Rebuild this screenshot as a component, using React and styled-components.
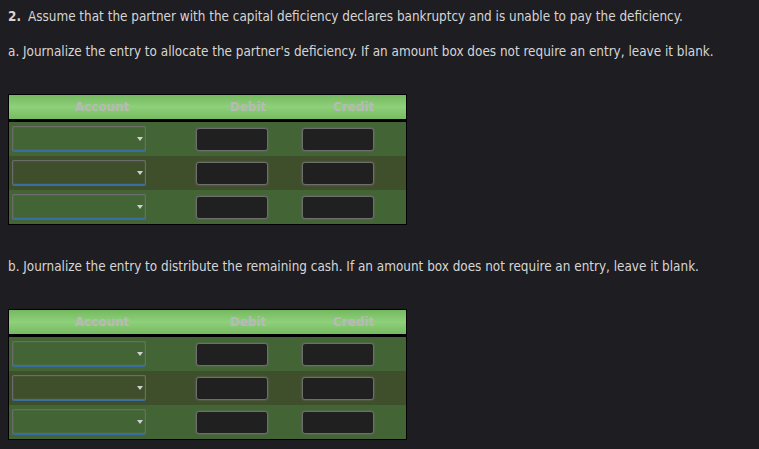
import React from 'react';
import styled, { createGlobalStyle } from 'styled-components';

const GlobalStyle = createGlobalStyle`
  html, body {
    margin: 0;
    padding: 0;
    background-color: #1e1d22;
  }
  body {
    font-family: "DejaVu Sans Condensed", "Liberation Sans", sans-serif;
  }
`;

const Page = styled.div`
  width: 759px;
  height: 449px;
  padding: 9px 8px 0 8px;
  box-sizing: border-box;
  color: #d6d6d6;
  font-size: 13.4px;
  overflow: hidden;
`;

const Question = styled.p`
  margin: 0;
  line-height: 16px;
  white-space: nowrap;

  strong {
    font-weight: 700;
    margin-right: 7px;
  }
`;

const Part = styled.p`
  margin: ${(p) => p.$top}px 0 0 0;
  line-height: 16px;
  white-space: nowrap;
`;

const Journal = styled.div`
  width: 399px;
  margin-top: ${(p) => p.$top}px;
  border: 1px solid #000;
  box-sizing: border-box;
  background: #000;
`;

const Header = styled.div`
  display: grid;
  grid-template-columns: 186px 106px 1fr;
  height: 24px;
  align-items: center;
  background: linear-gradient(to bottom, #74b960 0%, #8fd07a 50%, #76ba61 100%);
  border-bottom: 3px solid #000;
  color: #b9b9b9;
  font-family: "DejaVu Sans", Tahoma, sans-serif;
  font-weight: 700;
  font-size: 12px;
  text-align: center;
`;

const Row = styled.div`
  display: grid;
  grid-template-columns: 186px 106px 1fr;
  height: 34px;
  align-items: center;
  background: ${(p) => (p.$alt ? '#404f2b' : '#436536')};
`;

const SelectCell = styled.div`
  padding-left: 3px;
`;

const Select = styled.div`
  position: relative;
  width: 134px;
  height: 26px;
  box-sizing: border-box;
  border: 1px solid #6b6b6b;
  border-bottom: 2px solid #3a6ea0;
  border-radius: 2px;
  box-shadow: inset 0 0 1px #888;
`;

const Caret = styled.span`
  position: absolute;
  right: 2px;
  top: 10px;
  width: 0;
  height: 0;
  border-left: 3px solid transparent;
  border-right: 3px solid transparent;
  border-top: 4px solid #d0d0d0;
`;

const AmountCell = styled.div`
  display: flex;
  padding-left: 1px;
`;

const Amount = styled.div`
  width: 72px;
  height: 23px;
  box-sizing: border-box;
  background: #202020;
  border: 1px solid #6e6e6e;
  border-radius: 3px;
  box-shadow: 0 0 2px #6e6e6e;
`;

const JournalTable = ({ top }) => (
  <Journal $top={top}>
    <Header>
      <span>Account</span>
      <span>Debit</span>
      <span>Credit</span>
    </Header>
    {[false, true, false].map((alt, i) => (
      <Row key={i} $alt={alt}>
        <SelectCell>
          <Select>
            <Caret />
          </Select>
        </SelectCell>
        <AmountCell>
          <Amount />
        </AmountCell>
        <AmountCell>
          <Amount />
        </AmountCell>
      </Row>
    ))}
  </Journal>
);

export default function App() {
  return (
    <>
      <GlobalStyle />
      <Page>
        <Question>
          <strong>2.</strong>
          Assume that the partner with the capital deficiency declares bankruptcy and is unable to pay the deficiency.
        </Question>
        <Part $top={19}>
          a. Journalize the entry to allocate the partner's deficiency. If an amount box does not require an entry, leave it blank.
        </Part>
        <JournalTable top={34} />
        <Part $top={34}>
          b. Journalize the entry to distribute the remaining cash. If an amount box does not require an entry, leave it blank.
        </Part>
        <JournalTable top={34} />
      </Page>
    </>
  );
}
